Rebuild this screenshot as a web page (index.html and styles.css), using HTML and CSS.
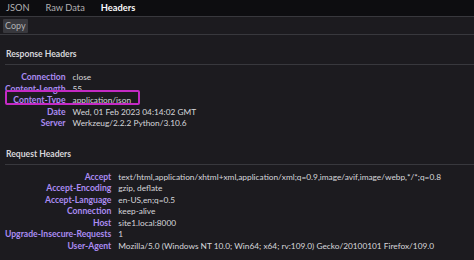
FILE: index.html
```html
<!DOCTYPE html>
<html>
<head>
<meta charset="utf-8">
<link rel="stylesheet" href="styles.css">
</head>
<body>
<div class="tabs">
  <span class="tab">JSON</span>
  <span class="tab">Raw Data</span>
  <span class="tab active">Headers</span>
</div>
<div class="toolbar">
  <span class="btn">Copy</span>
</div>
<div class="content">
  <div class="section">
    <div class="heading">Response Headers</div>
    <div class="table">
      <div class="name">Connection</div><div class="value">close</div>
      <div class="name">Content-Length</div><div class="value">55</div>
      <div class="name">Content-Type</div><div class="value">application/json</div>
      <div class="name">Date</div><div class="value">Wed, 01 Feb 2023 04:14:02 GMT</div>
      <div class="name">Server</div><div class="value">Werkzeug/2.2.2 Python/3.10.6</div>
    </div>
    <div class="highlight"></div>
  </div>
  <div class="section second">
    <div class="heading">Request Headers</div>
    <div class="table">
      <div class="name">Accept</div><div class="value">text/html,application/xhtml+xml,application/xml;q=0.9,image/avif,image/webp,*/*;q=0.8</div>
      <div class="name">Accept-Encoding</div><div class="value">gzip, deflate</div>
      <div class="name">Accept-Language</div><div class="value">en-US,en;q=0.5</div>
      <div class="name">Connection</div><div class="value">keep-alive</div>
      <div class="name">Host</div><div class="value">site1.local:8000</div>
      <div class="name">Upgrade-Insecure-Requests</div><div class="value">1</div>
      <div class="name">User-Agent</div><div class="value">Mozilla/5.0 (Windows NT 10.0; Win64; x64; rv:109.0) Gecko/20100101 Firefox/109.0</div>
    </div>
  </div>
</div>
</body>
</html>
```
FILE: styles.css
```css
html, body {
  margin: 0;
  padding: 0;
  background: #1c1b1f;
  font-family: Lato, "Noto Sans", sans-serif;
  font-size: 8.6px;
  color: #d7d7db;
  overflow: hidden;
  width: 474px;
  height: 260px;
}
.tabs {
  height: 17px;
  box-sizing: border-box;
  background: #0d0d10;
  border-bottom: 1px solid #38383d;
  display: flex;
  align-items: center;
  padding-left: 6px;
  gap: 16px;
  font-size: 9.3px;
}
.tab {
  color: #b1b1b3;
  line-height: 14px;
}
.tab.active {
  color: #f9f9fa;
  font-weight: 700;
}
.toolbar {
  height: 18px;
  box-sizing: border-box;
  border-bottom: 1px solid #38383d;
  display: flex;
  align-items: center;
  padding-left: 3px;
  background: #1c1b1f;
}
.btn {
  background: #38383d;
  color: #b1b1b3;
  padding: 0 2px;
  height: 14px;
  line-height: 14px;
  border-radius: 1px;
  font-size: 9px;
}
.content {
  padding: 0 0 0 5px;
}
.section {
  position: relative;
  padding-top: 13px;
}
.section.second {
  padding-top: 18px;
}
.heading {
  font-weight: 700;
  color: #d7d7db;
  line-height: 13px;
  padding-left: 1px;
  border-bottom: 1px solid #38383d;
  padding-bottom: 3px;
}
.table {
  display: grid;
  grid-template-columns: max-content 1fr;
  column-gap: 7px;
  padding-top: 7px;
  line-height: 11.5px;
}
.name {
  text-align: right;
  font-weight: 700;
  color: #ab8cf3;
  white-space: nowrap;
}
.value {
  white-space: nowrap;
  color: #d7d7db;
  font-size: 8.3px;
}
.highlight {
  position: absolute;
  left: 0;
  top: 55px;
  width: 131px;
  height: 11px;
  border: 2px solid #c42ac4;
  border-radius: 2px;
}
```
